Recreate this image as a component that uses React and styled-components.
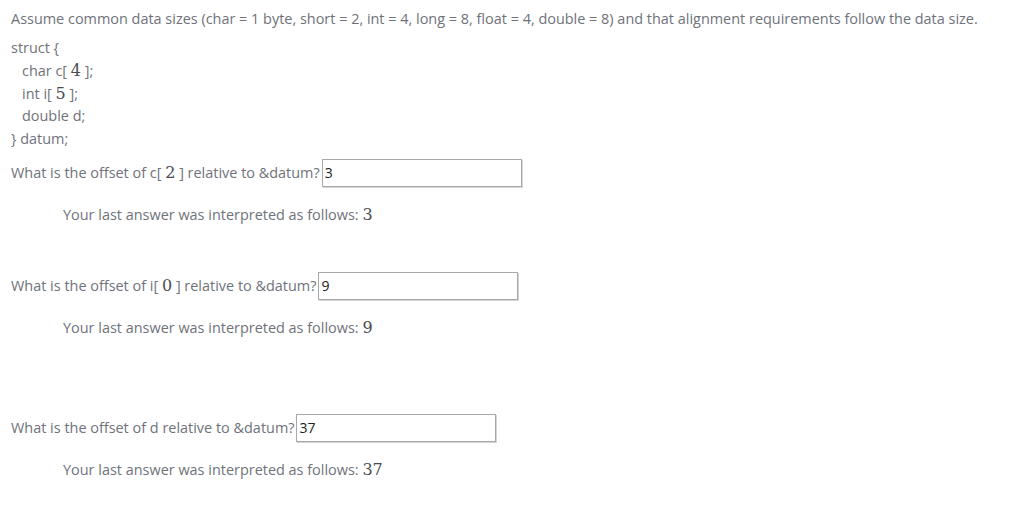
import React from "react";
import styled, { createGlobalStyle } from "styled-components";

const Global = createGlobalStyle`
  html, body { margin: 0; padding: 0; background: #fff; }
  body { font-family: "Open Sans", "Liberation Sans", sans-serif; font-size: 14.45px; color: #6f727b; }
`;

const Page = styled.div`
  padding: 9px 11px;
  display: flex;
  flex-direction: column;
`;

const Para = styled.p`
  margin: 0;
  line-height: 20px;
  margin-bottom: ${(p) => p.$mb || 0}px;
`;

const Code = styled.div`
  display: flex;
  flex-direction: column;
  margin-bottom: 8px;
`;

const CodeLine = styled.div`
  line-height: 22.75px;
  height: 22.75px;
  padding-left: ${(p) => (p.$indent ? 11 : 0)}px;
`;

const Num = styled.span`
  font-family: "DejaVu Serif", "Liberation Serif", serif;
  font-size: 16px;
  line-height: 1;
  color: #4a4c52;
`;

const Question = styled.div`
  display: flex;
  align-items: center;
  margin-top: ${(p) => p.$mt || 0}px;
`;

const Answer = styled.input`
  width: 200px;
  height: 28px;
  box-sizing: border-box;
  margin-left: 2px;
  padding: 0 2px;
  border: 1px solid #a8a8a8;
  box-shadow: 1px 1px 0 #d4d4d4;
  font-family: "Open Sans", "Liberation Sans", sans-serif;
  font-size: 14px;
  color: #222;
  outline: none;
  background: #fff;
`;

const Interp = styled.div`
  margin-top: 18px;
  padding-left: 52px;
  line-height: 20px;
`;

const items = [
  { q: <>What is the offset of c[ <Num>2</Num> ] relative to &amp;datum?</>, a: "3", mt: 0 },
  { q: <>What is the offset of i[ <Num>0</Num> ] relative to &amp;datum?</>, a: "9", mt: 47 },
  { q: <>What is the offset of d relative to &amp;datum?</>, a: "37", mt: 76 },
];

export default function App() {
  return (
    <>
      <Global />
      <Page>
        <Para $mb={8}>
          Assume common data sizes (char = 1 byte, short = 2, int = 4, long = 8, float = 4, double = 8) and that alignment requirements follow the data size.
        </Para>
        <Code>
          <CodeLine>struct {"{"}</CodeLine>
          <CodeLine $indent>char c[ <Num>4</Num> ];</CodeLine>
          <CodeLine $indent>int i[ <Num>5</Num> ];</CodeLine>
          <CodeLine $indent>double d;</CodeLine>
          <CodeLine>{"}"} datum;</CodeLine>
        </Code>
        {items.map((it, i) => (
          <React.Fragment key={i}>
            <Question $mt={it.mt}>
              <span>{it.q}</span>
              <Answer defaultValue={it.a} />
            </Question>
            <Interp>
              Your last answer was interpreted as follows: <Num>{it.a}</Num>
            </Interp>
          </React.Fragment>
        ))}
      </Page>
    </>
  );
}
